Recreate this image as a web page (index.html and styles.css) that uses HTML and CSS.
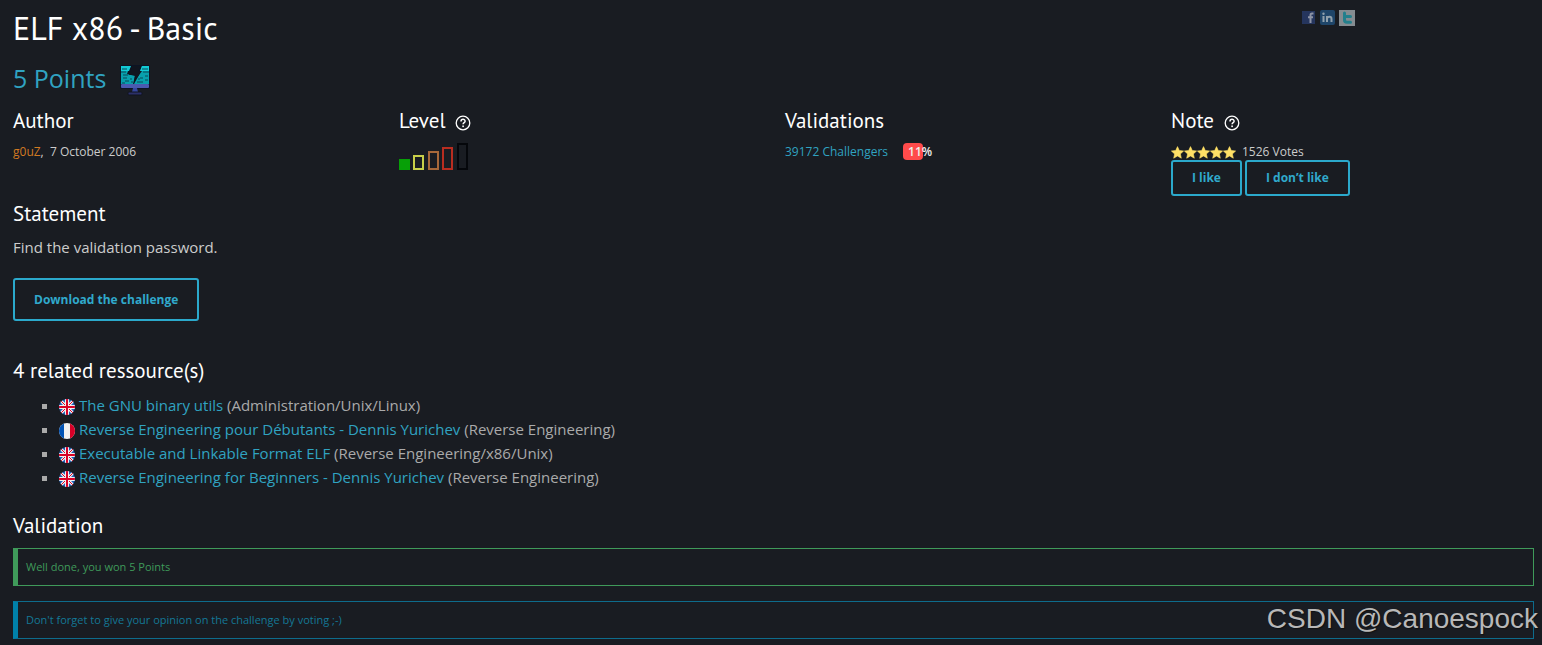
FILE: index.html
```
<!DOCTYPE html>
<html lang="en">
<head>
    <meta charset="UTF-8">
    <meta name="viewport" content="width=device-width, initial-scale=1.0">
    <title>ELF x86 - Basic</title>
    <link rel="stylesheet" href="styles.css">
</head>
<body>
    <!-- Shared shapes -->
    <svg class="sprites" width="0" height="0" aria-hidden="true">
        <defs>
            <clipPath id="round"><circle cx="8" cy="8" r="8"/></clipPath>
            <symbol id="flag-en" viewBox="0 0 16 16">
                <g clip-path="url(#round)">
                    <rect width="16" height="16" fill="#1f5fb8"/>
                    <path d="M0 0L16 16M16 0L0 16" stroke="#f0f0f0" stroke-width="3"/>
                    <path d="M0 0L16 16M16 0L0 16" stroke="#d80027" stroke-width="1"/>
                    <path d="M8 0V16M0 8H16" stroke="#f0f0f0" stroke-width="4"/>
                    <path d="M8 0V16M0 8H16" stroke="#d80027" stroke-width="2"/>
                </g>
            </symbol>
            <symbol id="flag-fr" viewBox="0 0 16 16">
                <g clip-path="url(#round)">
                    <rect width="16" height="16" fill="#f0f0f0"/>
                    <rect width="5" height="16" fill="#0052b4"/>
                    <rect x="11" width="5" height="16" fill="#d80027"/>
                </g>
            </symbol>
            <symbol id="help" viewBox="0 0 16 16">
                <circle cx="8" cy="8" r="6.8" fill="none" stroke="#fff" stroke-width="1.3"/>
                <path d="M6 6.4C6 3.6 10.1 3.7 10.1 6.2C10.1 7.7 8.1 7.6 8.1 9.3" fill="none" stroke="#fff" stroke-width="1.5"/>
                <rect x="7.3" y="10.5" width="1.6" height="1.6" fill="#fff"/>
            </symbol>
            <symbol id="star" viewBox="0 0 13 13">
                <path d="M6.5 .6L8.3 4.5L12.6 5L9.4 7.9L10.3 12.2L6.5 10L2.7 12.2L3.6 7.9L.4 5L4.7 4.5Z" fill="#ffe066" stroke="#ffe066" stroke-width=".6" stroke-linejoin="round"/>
            </symbol>
        </defs>
    </svg>

    <header class="title-row">
        <h1>ELF x86 - Basic</h1>
        <nav class="share">
            <a href="#" aria-label="Facebook">
                <svg width="14" height="14" viewBox="0 0 14 14"><rect y="1" width="13" height="13" fill="#25355d"/><path d="M11.5 3.5H10Q8.5 3.5 8.5 5V13M6 7.3H11" fill="none" stroke="#8d93a5" stroke-width="2"/></svg>
            </a>
            <a href="#" aria-label="LinkedIn">
                <svg width="15" height="15" viewBox="0 0 15 15"><rect width="15" height="15" rx="2" fill="#1e4569"/><path d="M3.5 6V12M7 6V12M7 8.5Q7.5 6.8 9.5 6.8Q11.5 6.8 11.5 9V12" fill="none" stroke="#8fa0ac" stroke-width="2"/><circle cx="3.5" cy="3.7" r="1.2" fill="#8fa0ac"/></svg>
            </a>
            <a href="#" aria-label="Twitter">
                <svg width="16" height="16" viewBox="0 0 16 16"><rect width="16" height="16" fill="#858c91"/><path d="M5.500 3V10Q5.500 12.300 8 12.300H11.500M5.500 6.500H11.500" fill="none" stroke="#237f8c" stroke-width="3" stroke-linecap="round"/></svg>
            </a>
        </nav>
    </header>

    <div class="points">
        <span>5 Points</span>
        <svg width="30" height="32" viewBox="0 0 30 32" aria-hidden="true">
            <rect x="0" y="1" width="30" height="24" rx="2" fill="#0c1424"/>
            <path d="M1 2H10L7 10L15 12L13 20H1Z" fill="#08a0ad"/>
            <path d="M22 2H29V20H14L19 11Z" fill="#08a0ad"/>
            <path d="M1 2H11L9 7H1ZM22 2H29V7H20Z" fill="#12cbd5"/>
            <path d="M2 5H7M1 8H6M3 11H8M22 5H28M23 8H29M3 14H7M10 15H12M20 14H23M25 16H28M5 17H9M11 18H13M17 18H23M18 15H20M25 12H28M2 19H5" stroke="#0b4858" stroke-width="1"/>
            <path d="M12 2H21L18 7H22L14 18L15 11H9Z" fill="#10151f"/>
            <rect x="1" y="20" width="28" height="4" rx="1" fill="#4a5ab0"/>
            <path d="M13 24H17L18 28H12Z" fill="#3547a0"/>
            <rect x="8" y="28" width="14" height="3" rx="1" fill="#2b3068" stroke="#10131f"/>
        </svg>
    </div>

    <section class="infos">
        <div>
            <h2>Author</h2>
            <div class="meta"><a class="author" href="#">g0uZ</a>,&nbsp; 7 October 2006</div>
        </div>
        <div>
            <h2>Level <svg width="16" height="16"><use href="#help"/></svg></h2>
            <svg class="level" width="70" height="28" viewBox="0 0 70 28" role="img" aria-label="Very easy">
                <rect y="16" width="11" height="11" fill="#07a007"/>
                <rect x="15" y="13" width="9" height="13" fill="none" stroke="#c8cf49" stroke-width="2"/>
                <rect x="30" y="9" width="9" height="17" fill="none" stroke="#a7683a" stroke-width="2"/>
                <rect x="44" y="5" width="9" height="21" fill="none" stroke="#b92d20" stroke-width="2"/>
                <rect x="59" y="1" width="9" height="25" fill="none" stroke="#05070b" stroke-width="2"/>
            </svg>
        </div>
        <div>
            <h2>Validations</h2>
            <div class="meta"><a href="#">39172 Challengers</a><span class="rate">11%</span></div>
        </div>
        <div>
            <h2>Note <svg width="16" height="16"><use href="#help"/></svg></h2>
            <div class="meta votes">
                <span class="stars">
                    <svg width="13" height="13"><use href="#star"/></svg><svg width="13" height="13"><use href="#star"/></svg><svg width="13" height="13"><use href="#star"/></svg><svg width="13" height="13"><use href="#star"/></svg><svg width="13" height="13"><use href="#star"/></svg>
                </span>
                1526 Votes
            </div>
            <div class="vote-buttons">
                <button type="button" class="button small">I like</button>
                <button type="button" class="button small">I don’t like</button>
            </div>
        </div>
    </section>

    <section class="statement">
        <h2>Statement</h2>
        <p>Find the validation password.</p>
        <a class="button" href="#">Download the challenge</a>
    </section>

    <section class="resources">
        <h2>4 related ressource(s)</h2>
        <ul>
            <li><svg width="16" height="16"><use href="#flag-en"/></svg><a href="#">The GNU binary utils</a> (Administration/Unix/Linux)</li>
            <li><svg width="16" height="16"><use href="#flag-fr"/></svg><a href="#">Reverse Engineering pour Débutants - Dennis Yurichev</a> (Reverse Engineering)</li>
            <li><svg width="16" height="16"><use href="#flag-en"/></svg><a href="#">Executable and Linkable Format ELF</a> (Reverse Engineering/x86/Unix)</li>
            <li><svg width="16" height="16"><use href="#flag-en"/></svg><a href="#">Reverse Engineering for Beginners - Dennis Yurichev</a> (Reverse Engineering)</li>
        </ul>
    </section>

    <section class="validation">
        <h2>Validation</h2>
        <div class="alert success">Well done, you won 5 Points</div>
        <div class="alert info">Don't forget to give your opinion on the challenge by voting ;-)</div>
    </section>

    <div class="watermark">CSDN @Canoespock</div>
</body>
</html>
```
FILE: styles.css
```
* {
    box-sizing: border-box;
}

body {
    margin: 0;
    padding: 8px 8px 6px 13px;
    background-color: #191c22;
    color: #aaa;
    font-family: "Open Sans", sans-serif;
    font-size: 15px;
    line-height: 24px;
}

.sprites {
    position: absolute;
}

a {
    color: #30a3c1;
    text-decoration: none;
}

h1,
h2 {
    margin: 0;
    color: #fff;
    font-family: "PT Sans", "Noto Sans", sans-serif;
    font-weight: 400;
}

h1 {
    font-size: 32px;
    line-height: 40px;
}

h2 {
    font-size: 21px;
    line-height: 28px;
}

h2 svg {
    margin-left: 4px;
    vertical-align: -3px;
}

.title-row {
    display: flex;
    justify-content: space-between;
    align-items: flex-start;
}

.share {
    display: flex;
    gap: 4px;
    margin-right: 179px;
    padding-top: 2px;
}

.share svg {
    display: block;
}

.points {
    display: flex;
    align-items: center;
    gap: 14px;
    margin-top: 10px;
    color: #30a3c1;
    font-size: 25px;
    line-height: 40px;
}

.points svg {
    margin-top: 4px;
}

.infos {
    display: grid;
    grid-template-columns: repeat(4, 1fr);
    column-gap: 23px;
    margin-top: 9px;
}

.meta {
    display: flex;
    margin-top: 7px;
    color: #ccc;
    font-size: 12px;
    line-height: 20px;
}

.author {
    color: #d17a22;
}

.level {
    display: block;
    margin-top: 8px;
}

.rate {
    width: 20px;
    height: 17px;
    margin: 1px 0 0 15px;
    padding-left: 5px;
    border-radius: 4px;
    background-color: #ff4b4b;
    color: #eee;
    font-weight: 600;
    line-height: 18px;
    white-space: nowrap;
}

.votes {
    gap: 6px;
}

.stars {
    display: flex;
    align-items: center;
}

.vote-buttons {
    display: flex;
    gap: 3px;
    margin-top: -2px;
}

.button {
    display: inline-block;
    padding: 10px 19px;
    border: 2px solid #2ba9cc;
    border-radius: 3px;
    background: transparent;
    color: #30a9cc;
    font-family: inherit;
    font-size: 12px;
    font-weight: 700;
    line-height: 19px;
    cursor: pointer;
}

.button.small {
    padding: 6px 19px;
    line-height: 20px;
}

.button:hover {
    background-color: #22303a;
}

.statement {
    margin-top: 4px;
}

.statement p {
    margin: 7px 0 19px;
    color: #ccc;
}

.statement .button {
    vertical-align: top;
}

.resources {
    margin-top: 36px;
}

.resources ul {
    margin: 8px 0 0;
    padding-left: 46px;
    list-style: square;
}

.resources svg {
    margin-right: 4px;
    vertical-align: -4px;
}

.validation {
    margin-top: 23px;
}

.alert {
    margin-top: 8px;
    padding: 9px 8px;
    border: 1px solid;
    border-left-width: 5px;
    font-size: 11px;
    line-height: 18px;
}

.alert.success {
    border-color: #3f9a5a;
    color: #3f9a5a;
}

.alert.info {
    margin-top: 15px;
    border-color: #0d6c8c;
    border-left-color: #0080a8;
    color: #147896;
}

/* stamp over the bottom right corner */
.watermark {
    position: absolute;
    right: 4px;
    bottom: 8px;
    color: #b8b8b8;
    font-family: "Liberation Sans", sans-serif;
    font-size: 28px;
    line-height: 36px;
    text-shadow: 1px 1px 1px #111;
}
```
